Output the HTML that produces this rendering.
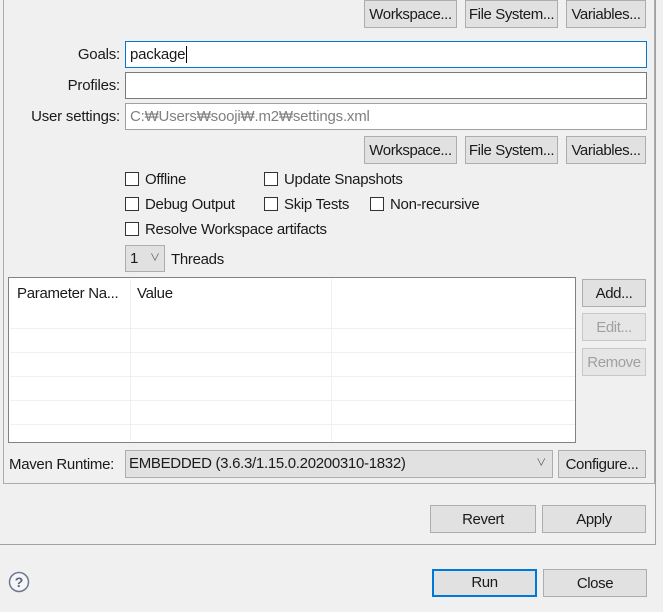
<!DOCTYPE html>
<html><head><style>
*{box-sizing:border-box;margin:0;padding:0}
body{width:663px;height:612px;background:#f0f0f0;font-family:"Liberation Sans","Noto Sans CJK KR",sans-serif;font-size:15px;color:#1a1a1a;position:relative;overflow:hidden}
.a{position:absolute}
.btn{position:absolute;background:#e1e1e1;border:1px solid #adadad;text-align:center;line-height:27px;height:28px;white-space:nowrap;letter-spacing:-0.4px}
.dis{color:#a0a0a0;border-color:#c8c8c8;background:#e6e6e6}
.inp{position:absolute;background:#fff;border:1px solid #7a7a7a;height:27px;line-height:26px;padding-left:4px;left:125px;width:522px;letter-spacing:-0.2px}
.lbl{position:absolute;right:543px;top:0;line-height:27px;letter-spacing:-0.2px}
.cb{position:absolute;width:14px;height:14px;border:1px solid #333;background:#fff}
.t{position:absolute;line-height:17px;letter-spacing:-0.3px}
.hl{position:absolute;left:10px;width:565px;height:1px;background:#f0f0f0}
</style></head><body>
<div class="a" style="left:3px;top:-1px;width:652px;height:485px;border:1px solid #adadad;border-top:none"></div>
<div class="btn" style="left:364px;top:0;width:93px">Workspace...</div>
<div class="btn" style="left:465px;top:0;width:93px">File System...</div>
<div class="btn" style="left:566px;top:0;width:80px">Variables...</div>

<div class="lbl" style="top:41px">Goals:</div>
<div class="inp" style="top:41px;border-color:#0078d7">package<span style="border-left:1px solid #000;margin-left:1px"></span></div>
<div class="lbl" style="top:72px">Profiles:</div>
<div class="inp" style="top:72px"></div>
<div class="lbl" style="top:103px">User settings:</div>
<div class="inp" style="top:103px;color:#808080;border-color:#a0a0a0">C:₩Users₩sooji₩.m2₩settings.xml</div>

<div class="btn" style="left:364px;top:136px;width:93px">Workspace...</div>
<div class="btn" style="left:465px;top:136px;width:93px">File System...</div>
<div class="btn" style="left:566px;top:136px;width:80px">Variables...</div>

<div class="cb" style="left:125px;top:172px"></div><div class="t" style="left:145px;top:171px">Offline</div>
<div class="cb" style="left:264px;top:172px"></div><div class="t" style="left:284px;top:171px">Update Snapshots</div>
<div class="cb" style="left:125px;top:197px"></div><div class="t" style="left:145px;top:196px">Debug Output</div>
<div class="cb" style="left:264px;top:197px"></div><div class="t" style="left:284px;top:196px">Skip Tests</div>
<div class="cb" style="left:370px;top:197px"></div><div class="t" style="left:390px;top:196px">Non-recursive</div>
<div class="cb" style="left:125px;top:222px"></div><div class="t" style="left:145px;top:221px">Resolve Workspace artifacts</div>

<div class="a" style="left:125px;top:245px;width:40px;height:27px;background:#e1e1e1;border:1px solid #adadad;line-height:25px;padding-left:4px">1<span style="position:absolute;left:24px;top:0;font-size:10px;color:#555">&#8744;</span></div>
<div class="t" style="left:171px;top:251px">Threads</div>

<div class="a" style="left:8px;top:277px;width:568px;height:166px;background:#fff;border:1px solid #828282"></div>
<div class="a" style="left:130px;top:279px;width:1px;height:162px;background:#f0f0f0"></div>
<div class="a" style="left:331px;top:279px;width:1px;height:162px;background:#f0f0f0"></div>
<div class="hl" style="top:328px"></div><div class="hl" style="top:352px"></div><div class="hl" style="top:376px"></div><div class="hl" style="top:400px"></div><div class="hl" style="top:424px"></div>
<div class="t" style="left:17px;top:285px">Parameter Na...</div>
<div class="t" style="left:137px;top:285px">Value</div>

<div class="btn" style="left:582px;top:279px;width:64px">Add...</div>
<div class="btn dis" style="left:582px;top:313px;width:64px">Edit...</div>
<div class="btn dis" style="left:582px;top:348px;width:64px">Remove</div>

<div class="t" style="left:9px;top:456px">Maven Runtime:</div>
<div class="a" style="left:125px;top:450px;width:428px;height:28px;background:#e1e1e1;border:1px solid #adadad;line-height:26px;padding-left:3px;letter-spacing:-0.3px">EMBEDDED (3.6.3/1.15.0.20200310-1832)<span style="position:absolute;right:6px;top:0;font-size:10px;color:#555">&#8744;</span></div>
<div class="btn" style="left:558px;top:450px;width:88px;height:28px">Configure...</div>

<div class="btn" style="left:430px;top:505px;width:106px">Revert</div>
<div class="btn" style="left:542px;top:505px;width:104px">Apply</div>

<div class="a" style="left:0;top:544px;width:656px;height:1px;background:#a0a0a0"></div>
<div class="a" style="left:655px;top:0;width:1px;height:545px;background:#a0a0a0"></div>

<svg class="a" style="left:8px;top:571px" width="22" height="22" viewBox="0 0 22 22"><circle cx="11" cy="11" r="9.5" fill="#f6f6f8" stroke="#6b7a90" stroke-width="1.5"/><text x="11" y="16" text-anchor="middle" font-family="Liberation Sans" font-weight="bold" font-size="14" fill="#5a6578">?</text></svg>

<div class="btn" style="left:432px;top:569px;width:105px;border:2px solid #0078d7;line-height:24px">Run</div>
<div class="btn" style="left:543px;top:569px;width:104px">Close</div>
</body></html>
